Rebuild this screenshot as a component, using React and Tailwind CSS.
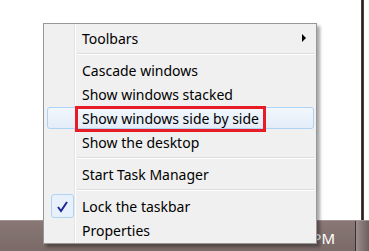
import React from 'react'

const font = { fontFamily: '"Noto Sans", "Open Sans", Arial, sans-serif' }

const Item = ({ children, hover, checked, arrow }) => (
  <div className="relative h-[24px] flex items-stretch">
    <div
      className={`absolute inset-y-px left-[3px] right-[2px] rounded-[3px] ${
        hover ? 'border border-[#aed3f5] bg-gradient-to-b from-[#f2f7fc] to-[#e3edf8]' : ''
      }`}
    />
    <div className="relative w-[33px] shrink-0 flex items-center justify-end">
      {checked && (
        <div className="mr-[3px] w-[23px] h-[24px] rounded-[3px] border border-[#aed3f5] bg-[#e8f1fb] flex items-center justify-center">
          <svg width="13" height="13" viewBox="0 0 13 13">
            <path d="M2 7 L5 11 L11 2" fill="none" stroke="#1d2a9a" strokeWidth="2" />
          </svg>
        </div>
      )}
    </div>
    <div className="relative flex-1 flex items-center pl-[5px] text-[14px] text-black">{children}</div>
    {arrow && (
      <div className="relative w-[14px] flex items-center">
        <div className="w-0 h-0 border-y-[4px] border-y-transparent border-l-[4px] border-l-black" />
      </div>
    )}
  </div>
)

const Sep = () => (
  <div className="h-[8px] flex items-center pl-[33px] pr-[2px]">
    <div className="w-full border-t border-[#dcdcdc] border-b border-b-white" />
  </div>
)

export default function App() {
  return (
    <div className="relative w-[369px] h-[251px] flex flex-col bg-white overflow-hidden" style={font}>
      <div className="flex-1 flex justify-end">
        <div className="w-[3px] mr-[5px] bg-[#2a2121] border-x border-[#4a3d3b]" />
      </div>
      <div className="h-[31px] flex border-t border-[#a39391] bg-gradient-to-b from-[#887775] to-[#7a6a68]">
        <div className="flex-1 flex items-center justify-end pr-[20px] pt-[4px]">
          <span className="text-white text-[15px]">PM</span>
        </div>
        <div className="w-[14px] border-l border-[#3b302f] bg-gradient-to-r from-[#9c8e8c] to-[#6d5f5d]" />
      </div>

      <div className="absolute left-[43px] top-[23px] w-[274px] border border-[#979797] bg-[#f0f0f0] pt-[2px] pb-[1px] shadow-[3px_3px_3px_rgba(0,0,0,0.35)]">
        <div className="absolute left-[30px] top-0 bottom-0 w-[2px] border-l border-[#e2e3e3] border-r border-r-white" />
        <Item arrow>Toolbars</Item>
        <Sep />
        <Item>Cascade windows</Item>
        <Item>Show windows stacked</Item>
        <Item hover>Show windows side by side</Item>
        <Item>Show the desktop</Item>
        <Sep />
        <Item>Start Task Manager</Item>
        <Sep />
        <Item checked>Lock the taskbar</Item>
        <Item>Properties</Item>
        <div className="absolute left-[31px] top-[82px] w-[191px] h-[26px] border-[3px] border-[#e81c24]" />
      </div>
    </div>
  )
}
